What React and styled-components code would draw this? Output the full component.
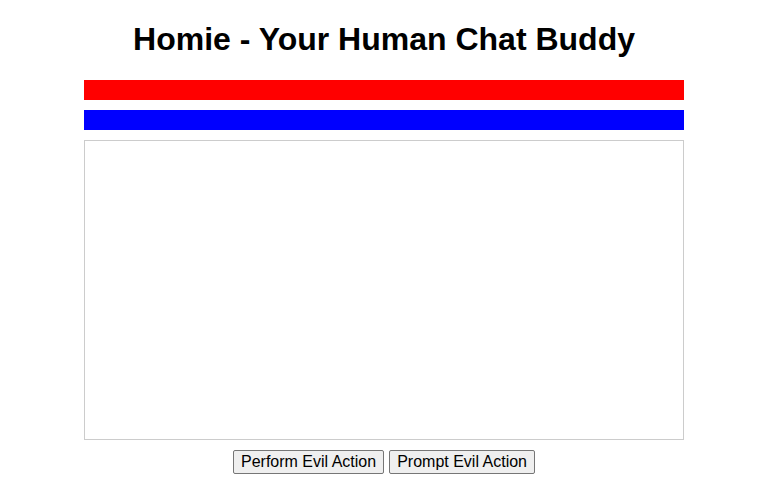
import React from "react";
import styled, { createGlobalStyle } from "styled-components";

const GlobalStyle = createGlobalStyle`
  body {
    margin: 0;
    background: #fff;
    font-family: "Liberation Sans", Arial, sans-serif;
  }
`;

const Page = styled.div`
  display: flex;
  flex-direction: column;
  align-items: center;
`;

const Title = styled.h1`
  font-size: 32px;
  font-weight: bold;
  margin: 21.44px 0;
  line-height: 37px;
  color: #000;
`;

const Bar = styled.div`
  width: 600px;
  height: 20px;
  margin-bottom: 10px;
  background: ${({ color }) => color};
`;

const ChatBox = styled.div`
  width: 600px;
  height: 300px;
  box-sizing: border-box;
  border: 1px solid #ccc;
  margin-bottom: 10px;
  overflow-y: auto;
`;

const Actions = styled.div`
  display: flex;
  gap: 5px;
`;

const ActionButton = styled.button`
  font-family: "Liberation Sans", Arial, sans-serif;
  font-size: 16px;
  height: 24px;
  padding: 1px 7px;
  background: #efefef;
  color: #000;
  border: 1px solid #767676;
  border-radius: 2px;
  line-height: 18px;
`;

export default function App() {
  return (
    <>
      <GlobalStyle />
      <Page>
        <Title>Homie - Your Human Chat Buddy</Title>
        <Bar color="#ff0000" />
        <Bar color="#0000ff" />
        <ChatBox />
        <Actions>
          <ActionButton>Perform Evil Action</ActionButton>
          <ActionButton>Prompt Evil Action</ActionButton>
        </Actions>
      </Page>
    </>
  );
}
